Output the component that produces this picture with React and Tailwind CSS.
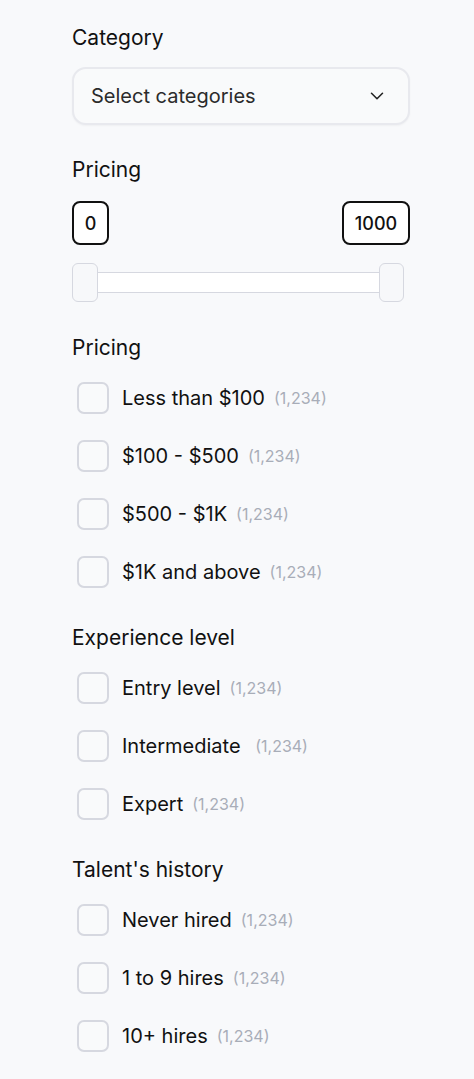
import { ChevronDown } from "lucide-react";

const sections = [
  {
    title: "Pricing",
    items: ["Less than $100", "$100 - $500", "$500 - $1K", "$1K and above"],
  },
  {
    title: "Experience level",
    items: ["Entry level", "Intermediate\u00a0", "Expert"],
  },
  {
    title: "Talent's history",
    items: ["Never hired", "1 to 9 hires", "10+ hires"],
  },
];

function CheckRow({ label }) {
  return (
    <label className="flex h-[32px] items-center">
      <span className="ml-[5px] h-[32px] w-[32px] shrink-0 rounded-[7px] border-2 border-[#d6d8e0] bg-[#f9fafb]" />
      <span className="ml-[13px] text-[20px] leading-[28px] text-[#111]">{label}</span>
      <span className="ml-[9px] text-[16px] leading-[20px] text-[#a8adb8]">(1,234)</span>
    </label>
  );
}

export default function App() {
  return (
    <div
      className="min-h-[1079px] w-full bg-[#f8f9fb] pt-[24px]"
      style={{ fontFamily: "Inter, 'Noto Sans', sans-serif" }}
    >
      <div className="ml-[72px] w-[338px]">
        <h3 className="text-[21px] leading-[28px] font-normal text-[#111]">Category</h3>
        <button className="mt-[15px] flex h-[58px] w-full items-center justify-between rounded-[14px] border-2 border-[#e8e9ee] bg-[#f9fafb] pl-[17px] pr-[20px] shadow-[0_1px_2px_rgba(0,0,0,0.04)]">
          <span className="text-[20px] text-[#2b2b2b]">Select categories</span>
          <ChevronDown className="h-[22px] w-[22px] text-[#222]" strokeWidth={1.7} />
        </button>

        <h3 className="mt-[31px] text-[21px] leading-[28px] font-normal text-[#111]">Pricing</h3>
        <div className="mt-[17px] flex justify-between">
          <div className="flex h-[44px] w-[37px] items-center justify-center rounded-[8px] border-2 border-[#111] bg-white text-[18px] font-medium text-[#111]">
            0
          </div>
          <div className="flex h-[44px] w-[68px] items-center justify-center rounded-[8px] border-2 border-[#111] bg-white text-[18px] font-medium text-[#111]">
            1000
          </div>
        </div>
        <div className="mt-[18px] flex h-[39px] items-center">
          <div className="h-[39px] w-[26px] shrink-0 rounded-[6px] border-[1.5px] border-[#d6d8e0] bg-[#f7f8fa]" />
          <div className="h-[21px] flex-1 border-y-[1.5px] border-[#d6d8e0] bg-white" />
          <div className="mr-[6px] h-[39px] w-[25px] shrink-0 rounded-[6px] border-[1.5px] border-[#d6d8e0] bg-[#f7f8fa]" />
        </div>

        {sections.map((s, i) => (
          <div key={s.title} className={i === 0 ? "mt-[32px]" : "mt-[36px]"}>
            <h3 className="text-[21px] leading-[28px] font-normal text-[#111]">{s.title}</h3>
            <div className="mt-[20px] flex flex-col gap-[26px]">
              {s.items.map((it) => (
                <CheckRow key={it} label={it} />
              ))}
            </div>
          </div>
        ))}
      </div>
    </div>
  );
}
